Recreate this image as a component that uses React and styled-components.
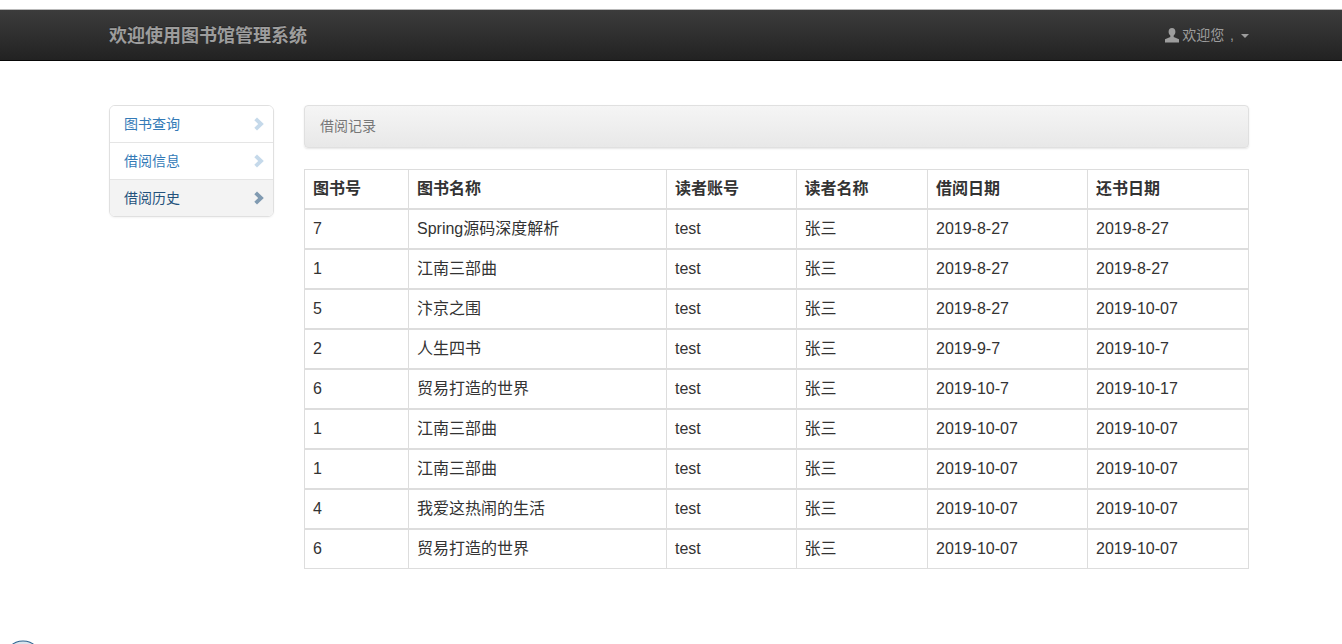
import React from "react";
import styled, { createGlobalStyle } from "styled-components";

const Global = createGlobalStyle`
  html, body { margin: 0; padding: 0; background: #fff; }
  body {
    font-family: "Liberation Sans", "Noto Sans CJK SC", sans-serif;
    color: #333;
    height: 644px;
    overflow: hidden;
  }
  * { box-sizing: border-box; }
`;

const Page = styled.div`
  padding-top: 9px;
`;

const Navbar = styled.header`
  height: 52px;
  border-top: 1px solid #b9b9b9;
  border-bottom: 1px solid #080808;
  background: linear-gradient(to bottom, #3c3c3c 0%, #222 100%);
  padding: 0 93px 0 109px;
  display: flex;
  align-items: center;
  justify-content: space-between;
`;

const Brand = styled.div`
  font-size: 18px;
  font-weight: 700;
  color: #9d9d9d;
  text-shadow: 0 -1px 0 rgba(0, 0, 0, 0.25);
  line-height: 20px;
  margin-top: 1px;
`;

const UserMenu = styled.div`
  display: flex;
  align-items: center;
  font-size: 14px;
  line-height: 20px;
  color: #9d9d9d;
`;

const UserIcon = styled.svg`
  width: 14px;
  height: 15px;
  margin-right: 3px;
  fill: #9d9d9d;
`;

const Greeting = styled.span`
  white-space: pre;
`;

const Comma = styled.span`
  margin-left: 2px;
`;

const Caret = styled.span`
  width: 0;
  height: 0;
  margin-left: 7px;
  margin-top: 2px;
  border-top: 4px solid #9d9d9d;
  border-left: 4px solid transparent;
  border-right: 4px solid transparent;
`;

const Main = styled.main`
  display: flex;
  align-items: flex-start;
  gap: 30px;
  padding: 44px 93px 0 109px;
`;

const SideNav = styled.nav`
  width: 165px;
  flex: none;
  border: 1px solid #e0e0e0;
  border-radius: 6px;
  overflow: hidden;
  box-shadow: 0 1px 2px rgba(0, 0, 0, 0.05);
`;

const SideItem = styled.a`
  display: flex;
  align-items: center;
  justify-content: space-between;
  height: ${(p) => (p.$first ? "36px" : "37px")};
  padding: 0 9px 0 14px;
  font-size: 14px;
  line-height: 20px;
  color: ${(p) => (p.$active ? "#23527c" : "#337ab7")};
  background: ${(p) => (p.$active ? "#f3f3f3" : "#fff")};
  border-top: ${(p) => (p.$first ? "none" : "1px solid #e5e5e5")};
`;

const Chevron = styled.svg`
  width: 10px;
  height: 14px;
  fill: currentColor;
  opacity: ${(p) => (p.$active ? 0.55 : 0.28)};
`;

const Content = styled.section`
  flex: 1;
  min-width: 0;
`;

const Breadcrumb = styled.div`
  height: 43px;
  margin-bottom: 21px;
  padding: 0 0 2px 15px;
  display: flex;
  align-items: center;
  font-size: 14px;
  line-height: 20px;
  color: #777;
  border: 1px solid #e0e0e0;
  border-radius: 4px;
  background: linear-gradient(to bottom, #f5f5f5 0%, #e8e8e8 100%);
  box-shadow: 0 1px 2px rgba(0, 0, 0, 0.1);
`;

const Table = styled.table`
  width: 944px;
  table-layout: fixed;
  border-collapse: collapse;
  font-size: 16px;
  line-height: 22px;
  color: #333;
`;

const Th = styled.th`
  height: 39px;
  padding: 0 8px;
  text-align: left;
  font-weight: 700;
  border: 1px solid #ddd;
  border-bottom: 2px solid #ddd;
`;

const Td = styled.td`
  height: 40px;
  padding: 0 8px;
  border: 1px solid #ddd;
  border-top: 2px solid #ddd;
`;

const Badge = styled.svg`
  position: fixed;
  left: 3px;
  top: 640px;
  width: 40px;
  height: 40px;
`;

const widths = [104, 258, 129.5, 131.5, 160, 161];
const heads = ["图书号", "图书名称", "读者账号", "读者名称", "借阅日期", "还书日期"];
const rows = [
  ["7", "Spring源码深度解析", "test", "张三", "2019-8-27", "2019-8-27"],
  ["1", "江南三部曲", "test", "张三", "2019-8-27", "2019-8-27"],
  ["5", "汴京之围", "test", "张三", "2019-8-27", "2019-10-07"],
  ["2", "人生四书", "test", "张三", "2019-9-7", "2019-10-7"],
  ["6", "贸易打造的世界", "test", "张三", "2019-10-7", "2019-10-17"],
  ["1", "江南三部曲", "test", "张三", "2019-10-07", "2019-10-07"],
  ["1", "江南三部曲", "test", "张三", "2019-10-07", "2019-10-07"],
  ["4", "我爱这热闹的生活", "test", "张三", "2019-10-07", "2019-10-07"],
  ["6", "贸易打造的世界", "test", "张三", "2019-10-07", "2019-10-07"],
];
const menu = ["图书查询", "借阅信息", "借阅历史"];

const ChevronIcon = ({ active }) => (
  <Chevron viewBox="0 0 10 14" $active={active}>
    <path d="M3 0.5 L9.8 7 L3 13.5 L0.3 10.8 L4.2 7 L0.3 3.2 Z" />
  </Chevron>
);

export default function App() {
  return (
    <Page>
      <Global />
      <Navbar>
        <Brand>欢迎使用图书馆管理系统</Brand>
        <UserMenu>
          <UserIcon viewBox="0 0 14 15">
            <path d="M7 0C4.8 0 3.6 1.6 3.6 3.7c0 1.6.7 3 1.7 3.8v1.4L0 11.2V14.5h14v-3.3L8.7 8.9V7.5c1-.8 1.7-2.2 1.7-3.8C10.4 1.6 9.2 0 7 0z" />
          </UserIcon>
          <Greeting>
            {"欢迎您 "}
            <Comma>,</Comma>
          </Greeting>
          <Caret />
        </UserMenu>
      </Navbar>
      <Main>
        <SideNav>
          {menu.map((m, i) => (
            <SideItem key={m} $first={i === 0} $active={i === 2}>
              {m}
              <ChevronIcon active={i === 2} />
            </SideItem>
          ))}
        </SideNav>
        <Content>
          <Breadcrumb>借阅记录</Breadcrumb>
          <Table>
            <colgroup>
              {widths.map((w, i) => (
                <col key={i} style={{ width: w }} />
              ))}
            </colgroup>
            <thead>
              <tr>
                {heads.map((h) => (
                  <Th key={h}>{h}</Th>
                ))}
              </tr>
            </thead>
            <tbody>
              {rows.map((r, i) => (
                <tr key={i}>
                  {r.map((c, j) => (
                    <Td key={j}>{c}</Td>
                  ))}
                </tr>
              ))}
            </tbody>
          </Table>
        </Content>
      </Main>
      <Badge viewBox="0 0 40 40">
        <circle cx="20" cy="19" r="18" fill="#dbe4ec" stroke="#2f6591" strokeWidth="1.2" />
      </Badge>
    </Page>
  );
}
